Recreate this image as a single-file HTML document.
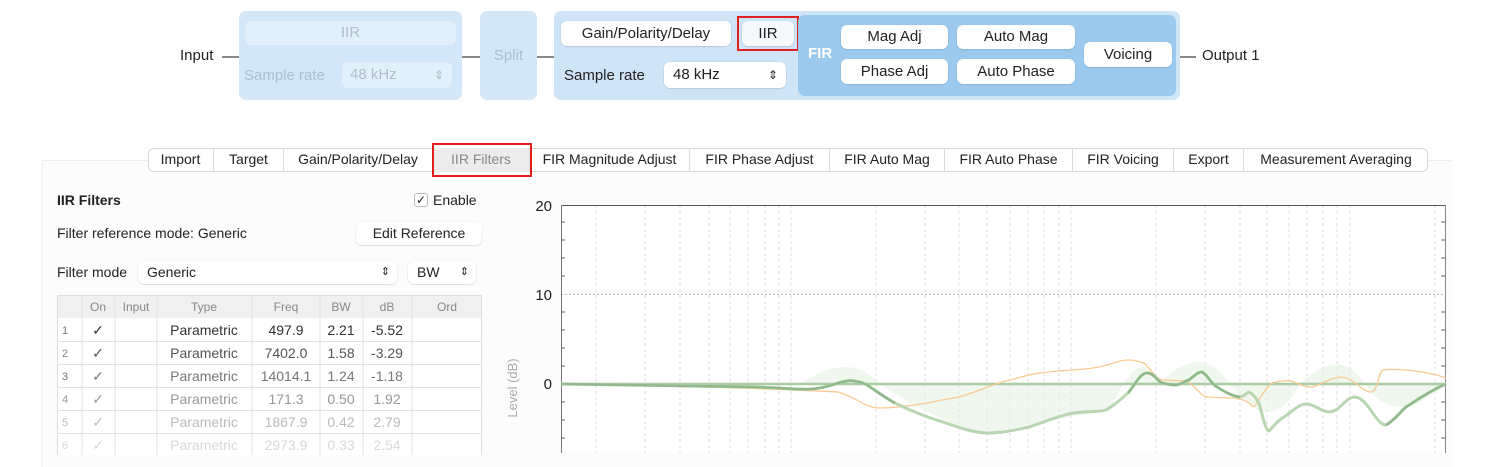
<!DOCTYPE html>
<html><head><meta charset="utf-8"><style>
*{box-sizing:border-box;margin:0;padding:0}
body{width:1500px;height:467px;background:#fff;font-family:"Liberation Sans",sans-serif;font-size:14px;color:#222;position:relative;overflow:hidden}
.a{position:absolute}
.box{position:absolute;border-radius:7px}
.btn{position:absolute;background:#fff;border-radius:6px;text-align:center;font-size:15px;box-shadow:0 0.5px 1.5px rgba(0,0,0,.2)}
.tab{position:absolute;top:148px;height:24px;line-height:23px;text-align:center;font-size:14px;border-right:1px solid #ddd}
.t{position:absolute;font-size:14px}
</style></head><body>
<div class="t" style="left:180px;top:47px;font-size:15px">Input</div>
<div class="a" style="left:222px;top:56px;width:17px;height:2px;background:#888"></div>
<div class="box" style="left:239px;top:11px;width:223px;height:89px;background:#d4e7f8"></div>
<div class="a" style="left:245px;top:21px;width:211px;height:24px;border-radius:6px;background:#e3effa;text-align:center;line-height:24px;color:#a9bfd2;font-size:15px">IIR</div>
<div class="t" style="left:244px;top:67px;color:#a9bfd2;font-size:15px">Sample rate</div>
<div class="a" style="left:342px;top:62px;width:110px;height:26px;border-radius:6px;background:#e3effa;color:#a9bfd2;font-size:15px;line-height:26px;padding-left:8px">48 kHz<span style="position:absolute;right:8px;font-size:12px">⇕</span></div>
<div class="a" style="left:462px;top:56px;width:18px;height:2px;background:#888"></div>
<div class="box" style="left:480px;top:11px;width:57px;height:89px;background:#d4e7f8;text-align:center;line-height:89px;color:#a9bfd2;font-size:15px">Split</div>
<div class="a" style="left:537px;top:56px;width:17px;height:2px;background:#888"></div>
<div class="box" style="left:554px;top:11px;width:626px;height:89px;background:#cfe4f7"></div>
<div class="btn" style="left:561px;top:21px;width:170px;height:25px;line-height:25px">Gain/Polarity/Delay</div>
<div class="btn" style="left:742px;top:21px;width:52px;height:25px;line-height:25px;background:#f6f9fc">IIR</div>
<div class="a" style="left:737px;top:16px;width:62px;height:35px;border:2px solid #e02020"></div>
<div class="t" style="left:564px;top:67px;font-size:15px">Sample rate</div>
<div class="btn" style="left:664px;top:62px;width:122px;height:26px;line-height:26px;text-align:left;padding-left:9px">48 kHz<span style="position:absolute;right:8px;font-size:12px">⇕</span></div>
<div class="box" style="left:798px;top:15px;width:378px;height:81px;background:#9ccaee"></div>
<div class="t" style="left:808px;top:45px;color:#fff;font-weight:bold;font-size:15px">FIR</div>
<div class="btn" style="left:841px;top:25px;width:107px;height:24px;line-height:24px">Mag Adj</div>
<div class="btn" style="left:957px;top:25px;width:118px;height:24px;line-height:24px">Auto Mag</div>
<div class="btn" style="left:841px;top:59px;width:107px;height:25px;line-height:25px">Phase Adj</div>
<div class="btn" style="left:957px;top:59px;width:118px;height:25px;line-height:25px">Auto Phase</div>
<div class="btn" style="left:1084px;top:42px;width:88px;height:25px;line-height:25px">Voicing</div>
<div class="a" style="left:1180px;top:56px;width:16px;height:2px;background:#888"></div>
<div class="t" style="left:1202px;top:47px;font-size:15px">Output 1</div>

<div class="a" style="left:42px;top:160px;width:1410px;height:307px;background:#fcfcfc;border-top:1px solid #eee;border-left:1px solid #eee"></div>
<div class="a" style="left:148px;top:148px;width:1280px;height:24px;background:#fff;border:1px solid #d6d6d6;border-radius:6px"></div>
<div class="tab" style="left:148px;width:66px">Import</div>
<div class="tab" style="left:214px;width:70px">Target</div>
<div class="tab" style="left:284px;width:149px">Gain/Polarity/Delay</div>
<div class="tab" style="left:433px;width:97px;background:#ececec;color:#888">IIR Filters</div>
<div class="tab" style="left:530px;width:160px">FIR Magnitude Adjust</div>
<div class="tab" style="left:690px;width:140px">FIR Phase Adjust</div>
<div class="tab" style="left:830px;width:115px">FIR Auto Mag</div>
<div class="tab" style="left:945px;width:128px">FIR Auto Phase</div>
<div class="tab" style="left:1073px;width:101px">FIR Voicing</div>
<div class="tab" style="left:1174px;width:70px">Export</div>
<div class="tab" style="left:1244px;width:184px;border:none">Measurement Averaging</div>
<div class="a" style="left:432px;top:143px;width:100px;height:34px;border:2px solid #e02020"></div>

<div class="t" style="left:57px;top:192px;font-weight:bold">IIR Filters</div>
<div class="a" style="left:414px;top:193px;width:14px;height:14px;border:1px solid #bbb;border-radius:3px;background:#fff;font-size:12px;line-height:12px;text-align:center">✓</div>
<div class="t" style="left:433px;top:192px">Enable</div>
<div class="t" style="left:57px;top:225px">Filter reference mode: Generic</div>
<div class="btn" style="left:356px;top:222px;width:126px;height:23px;line-height:23px;font-size:14px">Edit Reference</div>
<div class="t" style="left:57px;top:264px">Filter mode</div>
<div class="btn" style="left:138px;top:261px;width:259px;height:23px;line-height:23px;font-size:14px;text-align:left;padding-left:9px">Generic<span style="position:absolute;right:7px;font-size:11px">⇕</span></div>
<div class="btn" style="left:408px;top:261px;width:68px;height:23px;line-height:23px;font-size:14px;text-align:left;padding-left:9px">BW<span style="position:absolute;right:7px;font-size:11px">⇕</span></div>
<div class="a" style="left:57px;top:295px;width:425px;height:160px;background:#fff;border:1px solid #ddd;border-bottom:none;overflow:hidden">
<div style="height:22px;background:#f0f0f0"></div>
</div>
<svg class="a" style="left:57px;top:295px" width="426" height="160">
<g stroke="#e2e2e2" stroke-width="1">
<line x1="25" y1="0" x2="25" y2="160"/><line x1="58" y1="0" x2="58" y2="160"/><line x1="100" y1="0" x2="100" y2="160"/><line x1="195" y1="0" x2="195" y2="160"/><line x1="263" y1="0" x2="263" y2="160"/><line x1="306" y1="0" x2="306" y2="160"/><line x1="355" y1="0" x2="355" y2="160"/>
<line x1="0" y1="46.5" x2="425" y2="46.5"/><line x1="0" y1="69.5" x2="425" y2="69.5"/><line x1="0" y1="92.5" x2="425" y2="92.5"/><line x1="0" y1="115.5" x2="425" y2="115.5"/><line x1="0" y1="138.5" x2="425" y2="138.5"/>
</g>
<g font-family="Liberation Sans" font-size="12" fill="#888" text-anchor="middle">
<text x="41" y="16">On</text><text x="79" y="16">Input</text><text x="147" y="16">Type</text><text x="229" y="16">Freq</text><text x="284" y="16">BW</text><text x="330" y="16">dB</text><text x="390" y="16">Ord</text>
</g>
<g font-family="Liberation Sans" font-size="14" text-anchor="middle">
<g fill="#333"><text x="147" y="40">Parametric</text><text x="229" y="40">497.9</text><text x="284" y="40">2.21</text><text x="330" y="40">-5.52</text><text x="41" y="40">✓</text><text x="8" y="39" font-size="11" fill="#777">1</text></g>
<g fill="#555"><text x="147" y="63">Parametric</text><text x="229" y="63">7402.0</text><text x="284" y="63">1.58</text><text x="330" y="63">-3.29</text><text x="41" y="63">✓</text><text x="8" y="62" font-size="11" fill="#888">2</text></g>
<g fill="#777"><text x="147" y="86">Parametric</text><text x="229" y="86">14014.1</text><text x="284" y="86">1.24</text><text x="330" y="86">-1.18</text><text x="41" y="86">✓</text><text x="8" y="85" font-size="11">3</text></g>
<g fill="#999"><text x="147" y="109">Parametric</text><text x="229" y="109">171.3</text><text x="284" y="109">0.50</text><text x="330" y="109">1.92</text><text x="41" y="109">✓</text><text x="8" y="108" font-size="11">4</text></g>
<g fill="#bbb"><text x="147" y="132">Parametric</text><text x="229" y="132">1867.9</text><text x="284" y="132">0.42</text><text x="330" y="132">2.79</text><text x="41" y="132">✓</text><text x="8" y="131" font-size="11">5</text></g>
<g fill="#d8d8d8"><text x="147" y="155">Parametric</text><text x="229" y="155">2973.9</text><text x="284" y="155">0.33</text><text x="330" y="155">2.54</text><text x="41" y="155">✓</text><text x="8" y="154" font-size="11">6</text></g>
</g>
</svg>

<svg class="a" style="left:0;top:0" width="1500" height="467">
<rect x="561" y="205" width="885" height="248" fill="#fff"/>
<g stroke="#ddd" stroke-dasharray="3,3" stroke-width="1">
<path d="M596 205V453M645 205V453M680 205V453M709 205V453M730 205V453M748 205V453M765 205V453M779 205V453M791 205V453M876 205V453M925 205V453M959 205V453M987 205V453M1010 205V453M1028 205V453M1044 205V453M1059 205V453M1071 205V453M1156 205V453M1205 205V453M1240 205V453M1267 205V453M1289 205V453M1307 205V453M1323 205V453M1337 205V453M1350 205V453M1435 205V453"/>
</g>
<line x1="561" y1="294.5" x2="1446" y2="294.5" stroke="#bbb" stroke-dasharray="2,2"/>
<line x1="561" y1="205.5" x2="1446" y2="205.5" stroke="#555"/>
<line x1="561.5" y1="205" x2="561.5" y2="453" stroke="#777"/>
<line x1="1445.5" y1="205" x2="1445.5" y2="453" stroke="#888"/>
<g stroke="#666"><path d="M561 222h4M561 240h4M561 258h4M561 276h4M561 312h4M561 330h4M561 348h4M561 366h4M561 402h4M561 420h4M561 438h4M1441 222h5M1441 240h5M1441 258h5M1441 276h5M1441 312h5M1441 330h5M1441 348h5M1441 366h5M1441 402h5M1441 420h5M1441 438h5"/></g>
<g font-family="Liberation Sans" font-size="15" fill="#222" text-anchor="end"><text x="552" y="211">20</text><text x="552" y="300">10</text><text x="552" y="389">0</text></g>
<text transform="translate(517,388) rotate(-90)" font-family="Liberation Sans" font-size="13" fill="#aaa" text-anchor="middle">Level (dB)</text>
<path d="M800,384 Q850,350 880,384 Q950,430 991,433 Q1050,420 1110,410 Q1140,340 1160,384 Q1200,340 1230,384 Q1270,440 1300,384 Q1340,345 1365,384 Q1395,430 1446,384 Z" fill="#e6f2e3" opacity="0.6"/>
<line x1="561" y1="384" x2="1446" y2="384" stroke="#a9cda3" stroke-width="2.5"/>
<path d="M561,384 C700,386 800,390 838,392 C848,395 852,398 857,400 C865,405 872,408 879,408 C895,408 905,406 915,405 C935,402 945,399 959,397 C980,391 995,383 1010,380 C1025,376 1035,373 1048,372 C1065,370 1080,370 1093,368 C1108,366 1118,360 1128,360 C1136,360 1140,362 1144,363 C1152,370 1156,380 1163,380 C1172,381 1180,380 1186,381 C1196,385 1200,397 1208,397 C1220,398 1228,398 1233,398 C1243,399 1249,402 1252,406 C1256,410 1262,390 1272,383 C1280,381 1286,380 1291,381 C1300,384 1306,388 1313,387 C1322,384 1332,377 1342,377 C1354,378 1362,392 1371,392 C1378,392 1378,372 1383,370 C1400,368 1430,372 1446,378" fill="none" stroke="#f9c994" stroke-width="1.3"/>
<path d="M561,384 C650,385 720,386 755,387 C785,388 800,390 812,389 C825,388 832,385 838,383 C845,381 850,380 854,381 C860,382 864,383 867,385 C878,392 885,398 895,403 C915,413 930,418 946,423 C960,428 975,433 988,433 C1002,433 1015,430 1029,427 C1045,422 1060,415 1074,413 C1090,411 1100,412 1106,410 C1115,405 1122,398 1128,393 C1135,385 1140,373 1147,373 C1155,373 1158,383 1163,383 C1170,385 1173,385 1176,385 C1183,384 1186,380 1189,380 C1195,375 1198,372 1202,372 C1208,375 1212,385 1217,387 C1225,392 1232,396 1240,397 C1245,396 1247,392 1249,392 C1253,394 1256,398 1259,403 C1263,418 1266,431 1269,431 C1275,425 1278,420 1284,417 C1293,411 1298,404 1307,404 C1316,405 1322,412 1329,412 C1340,412 1345,397 1355,397 C1368,398 1376,425 1386,425 C1395,420 1400,412 1406,407 C1420,398 1432,390 1446,384" fill="none" stroke="#b9d6b3" stroke-width="3"/>
<path d="M561,384 C650,385 720,386 755,387 C785,388 800,390 812,389 C825,388 832,385 838,383 C845,381 850,380 854,381 C860,382 864,383 867,385 C878,392 885,398 895,403 M1128,393 C1135,385 1140,373 1147,373 C1155,373 1158,383 1163,383 C1170,385 1173,385 1176,385 C1183,384 1186,380 1189,380 C1195,375 1198,372 1202,372 C1208,375 1212,385 1217,387 C1225,392 1232,396 1240,397 M1386,425 C1395,420 1400,412 1406,407 C1420,398 1432,390 1446,384" fill="none" stroke="#8fb98a" stroke-width="2.5"/>
</svg>
</body></html>
